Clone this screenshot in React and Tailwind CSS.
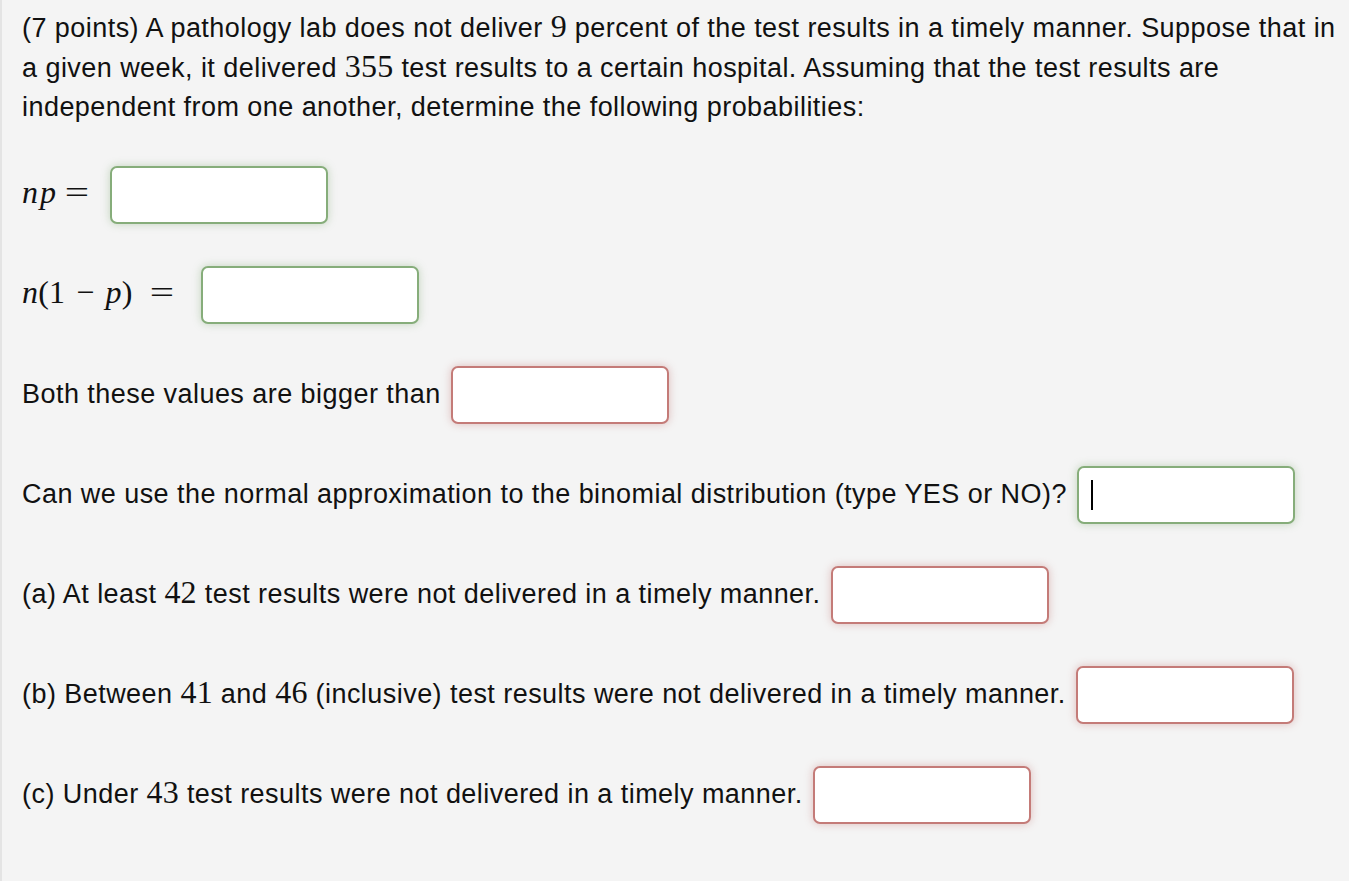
import React from 'react';

const M = ({ children, className = '' }) => (
    <span className={`font-['Liberation_Serif',serif] text-[32px] leading-none tracking-[0.2px] ${className}`}>{children}</span>
);

const Box = ({ tone, cursor }) => (
    <div
        className={
            'ml-[10px] flex h-[58px] w-[218px] shrink-0 items-center rounded-[7px] border-2 bg-white px-[12px] ' +
            (tone === 'green'
                ? 'border-[#86ad7a] shadow-[0_0_8px_rgba(134,173,122,0.45)]'
                : 'border-[#c47b78] shadow-[0_0_8px_rgba(196,123,120,0.45)]')
        }
    >
        {cursor && <span className="block h-[30px] w-[2px] bg-black" />}
    </div>
);

const Row = ({ children, tone, cursor }) => (
    <div className="mt-[42px] flex h-[58px] items-center">
        <div className="whitespace-nowrap">{children}</div>
        <Box tone={tone} cursor={cursor} />
    </div>
);

export default function App() {
    return (
        <div className="min-h-[881px] border-l-2 border-[#e4e4e4] bg-[#f4f4f4] pl-[20px] pt-[9px] font-['Liberation_Sans',Arial,sans-serif] text-[27px] leading-[39.5px] tracking-[0.45px] text-[#111]">
            <p className="whitespace-nowrap">
                (7 points) A pathology lab does not deliver <M>9</M> percent of the test results in a timely manner. Suppose that in
                <br />
                a given week, it delivered <M>355</M> test results to a certain hospital. Assuming that the test results are
                <br />
                independent from one another, determine the following probabilities:
            </p>
            <div className="mt-[38px] flex h-[58px] items-center">
                <div className="whitespace-nowrap">
                    <M><i className="tracking-[2px]">np</i><span className="ml-[10px] inline-block scale-x-[1.35]">=</span></M>
                </div>
                <div className="w-[14px]" />
                <Box tone="green" />
            </div>
            <Row tone="green">
                <M><i>n</i>(1<span className="mx-[11px]">−</span><i>p</i>)<span className="ml-[20px] inline-block scale-x-[1.35]">=</span></M>
                <span className="inline-block w-[20px]" />
            </Row>
            <Row tone="red">Both these values are bigger than</Row>
            <Row tone="green" cursor>Can we use the normal approximation to the binomial distribution (type YES or NO)?</Row>
            <Row tone="red">(a) At least <M>42</M> test results were not delivered in a timely manner.</Row>
            <Row tone="red">(b) Between <M>41</M> and <M>46</M> (inclusive) test results were not delivered in a timely manner.</Row>
            <Row tone="red">(c) Under <M>43</M> test results were not delivered in a timely manner.</Row>
        </div>
    );
}
